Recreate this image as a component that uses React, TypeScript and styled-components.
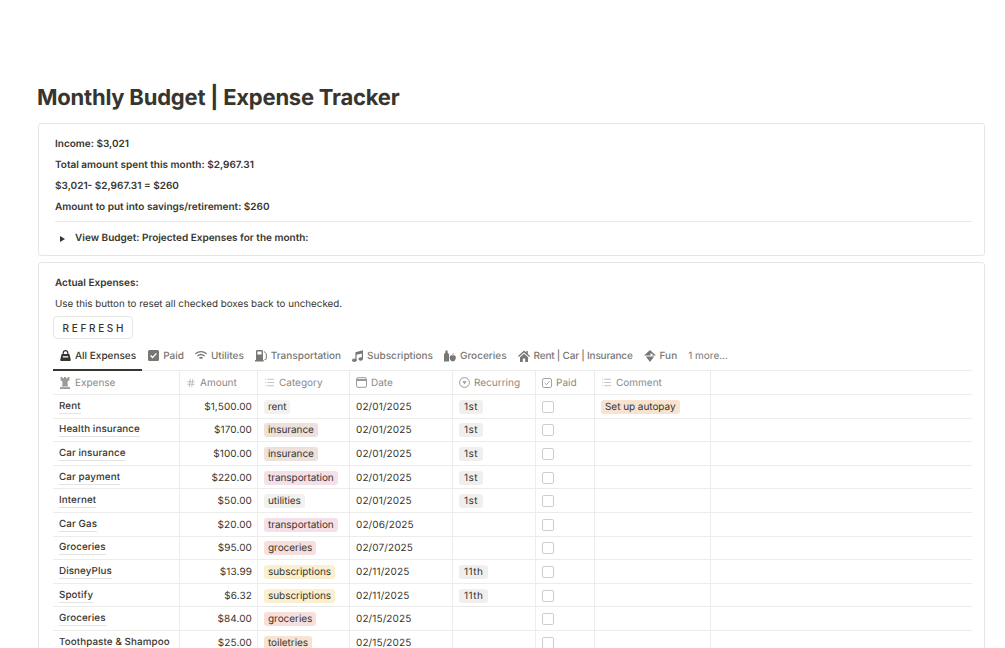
import React from 'react';
import styled, {createGlobalStyle} from "styled-components";
import {Hash, List} from "lucide-react";

const GlobalStyle = createGlobalStyle`
  html, body {
    margin: 0;
    height: 100%;
    overflow: hidden;
    background: #fff;
  }
  body {
    font-family: "Inter", "Liberation Sans", sans-serif;
    color: #37352f;
    text-rendering: geometricPrecision;
    -webkit-font-smoothing: antialiased;
  }
`

const colors = {
    gray: "#f0efed",
    brown: "#eee0da",
    pink: "#f5e0e9",
    red: "#f8dfdc",
    yellow: "#faf0d0",
    orange: "#f8e3d0",
    light: "#f1f1ef",
}

type Tag = { label: string, color: keyof typeof colors }

const rent: Tag = {label: "rent", color: "light"}
const insurance: Tag = {label: "insurance", color: "brown"}
const transportation: Tag = {label: "transportation", color: "pink"}
const utilities: Tag = {label: "utilities", color: "light"}
const groceries: Tag = {label: "groceries", color: "red"}
const subscriptions: Tag = {label: "subscriptions", color: "yellow"}
const toiletries: Tag = {label: "toiletries", color: "orange"}

const expenses = [
    {name: "Rent", amount: "$1,500.00", category: rent, date: "02/01/2025", recurring: "1st", comment: "Set up autopay"},
    {name: "Health insurance", amount: "$170.00", category: insurance, date: "02/01/2025", recurring: "1st"},
    {name: "Car insurance", amount: "$100.00", category: insurance, date: "02/01/2025", recurring: "1st"},
    {name: "Car payment", amount: "$220.00", category: transportation, date: "02/01/2025", recurring: "1st"},
    {name: "Internet", amount: "$50.00", category: utilities, date: "02/01/2025", recurring: "1st"},
    {name: "Car Gas", amount: "$20.00", category: transportation, date: "02/06/2025"},
    {name: "Groceries", amount: "$95.00", category: groceries, date: "02/07/2025"},
    {name: "DisneyPlus", amount: "$13.99", category: subscriptions, date: "02/11/2025", recurring: "11th"},
    {name: "Spotify", amount: "$6.32", category: subscriptions, date: "02/11/2025", recurring: "11th"},
    {name: "Groceries", amount: "$84.00", category: groceries, date: "02/15/2025"},
    {name: "Toothpaste & Shampoo", amount: "$25.00", category: toiletries, date: "02/15/2025"},
]

const BagLockIcon = () => (
    <svg width="11" height="11" viewBox="0 0 11 11" fill="currentColor">
        <path d="M2.6 4V3a2.900 2.900 0 0 1 5.800 0v1H7.200V3a1.700 1.700 0 0 0-3.400 0v1z"/>
        <path d="M1.600 4h7.800l1.300 5.600a1.100 1.100 0 0 1-1 1.400H1.300a1.100 1.100 0 0 1-1-1.400z"/>
        <rect x="2.800" y="6.200" width="5.400" height="1.300" fill="#fff"/>
    </svg>
)

const CheckedBox = () => (
    <svg width="11" height="11" viewBox="0 0 11 11">
        <rect width="11" height="11" rx="1.500" fill="currentColor"/>
        <path d="M2.600 5.600l2 2 3.800-4.200" stroke="#fff" strokeWidth="1.400" fill="none"/>
    </svg>
)

const WifiIcon = () => (
    <svg width="12" height="11" viewBox="0 0 12 11" fill="none" stroke="currentColor" strokeWidth="1.300" strokeLinecap="round">
        <path d="M.8 3.600c3-2.700 7.400-2.700 10.400 0"/>
        <path d="M2.800 5.800c1.900-1.600 4.500-1.600 6.400 0"/>
        <path d="M5 8c.6-.4 1.400-.4 2 0" strokeWidth="1.600"/>
    </svg>
)

const PumpIcon = () => (
    <svg width="12" height="12" viewBox="0 0 12 12" fill="currentColor">
        <path d="M1 1.200A1.200 1.200 0 0 1 2.200 0h4.600A1.200 1.200 0 0 1 8 1.200V10h.7v1.500H0V10h1zM2.400 1.500v3h4.200v-3z" fillRule="evenodd"/>
        <path d="M9 1.500l2.300 2.200v5.100a1 1 0 0 1-1.900.3" fill="none" stroke="currentColor" strokeWidth="1"/>
    </svg>
)

const MusicIcon = () => (
    <svg width="11" height="12" viewBox="0 0 11 12" fill="currentColor">
        <path d="M3.400 2.200L11 .2V9h-1.200V3.400L4.600 4.800V10.300H3.400z"/>
        <ellipse cx="2.300" cy="10.200" rx="2.300" ry="1.700"/>
        <ellipse cx="8.700" cy="9" rx="2.300" ry="1.700"/>
    </svg>
)

const GroceryIcon = () => (
    <svg width="12" height="12" viewBox="0 0 13 12" fill="currentColor">
        <path d="M1.500 0h2.400v2.200L5.500 4v8H0V4l1.500-1.800z"/>
        <path d="M9.500 5.400c1.800-.8 3.300.2 3.300 2.200 0 2.300-1.500 4.600-3.300 4.200-1.800.4-3.300-1.900-3.300-4.200 0-2 1.500-3 3.300-2.200z"/>
        <path d="M9.400 5c0-1 .4-1.800 1.300-2" stroke="currentColor" strokeWidth=".8" fill="none"/>
    </svg>
)

const HouseIcon = () => (
    <svg width="12" height="12" viewBox="0 0 12 12" fill="currentColor">
        <path d="M6 .6l2.300 2V1h1.500v3l2.200 2-.8.9L6 2.400.8 6.900 0 6z"/>
        <path d="M2 7.200L6 3.700l4 3.500V12H7.200V8.400H4.800V12H2z"/>
    </svg>
)

const DiamondIcon = () => (
    <svg width="12" height="12" viewBox="0 0 12 12" fill="currentColor">
        <path d="M6 0l6 5.400H0z"/>
        <path d="M1.800 6.600h8.400L6 12z"/>
        <path d="M6.500 3l2.600 1.800-2.600 1.800z" fill="#fff"/>
    </svg>
)

const RookIcon = () => (
    <svg width="12" height="12" viewBox="-1 0 12 12" fill="currentColor">
        <path d="M.6 0h1.800v1.200h1.600V0h2v1.200h1.600V0h1.800v3.200L7.600 4.600v3.600l1 1.400H1.400l1-1.400V4.600L.6 3.200z"/>
        <rect x="0" y="10.200" width="10" height="1.800"/>
    </svg>
)

const CalendarIcon = () => (
    <svg width="11" height="11" viewBox="0 0 11 11" fill="none" stroke="currentColor">
        <rect x=".5" y=".7" width="10" height="9.600" rx="1.500"/>
        <path d="M.5 3h10" strokeWidth="2"/>
    </svg>
)

const RecurringIcon = () => (
    <svg width="11" height="11" viewBox="0 0 11 11">
        <circle cx="5.500" cy="5.500" r="4.900" fill="none" stroke="currentColor"/>
        <path d="M3.200 4.300h4.600L5.500 7.300z" fill="currentColor"/>
    </svg>
)

const CheckHeadIcon = () => (
    <svg width="10" height="10" viewBox="0 0 10 10" fill="none" stroke="currentColor" strokeWidth=".9">
        <rect x=".5" y=".5" width="9" height="9" rx="1.400"/>
        <path d="M2.700 5l1.700 1.700 3-3.300"/>
    </svg>
)

const tabs = [
    {label: "Paid", icon: <CheckedBox/>},
    {label: "Utilites", icon: <WifiIcon/>},
    {label: "Transportation", icon: <PumpIcon/>},
    {label: "Subscriptions", icon: <MusicIcon/>},
    {label: "Groceries", icon: <GroceryIcon/>},
    {label: "Rent | Car | Insurance", icon: <HouseIcon/>, tight: true},
    {label: "Fun", icon: <DiamondIcon/>},
]

const columns = [
    {label: "Expense", width: 127, icon: <RookIcon/>},
    {label: "Amount", width: 78, icon: <Hash size={10} strokeWidth={1.4}/>},
    {label: "Category", width: 92, icon: <List size={11} strokeWidth={1.3}/>},
    {label: "Date", width: 103, icon: <CalendarIcon/>},
    {label: "Recurring", width: 83, icon: <RecurringIcon/>},
    {label: "Paid", width: 59, icon: <CheckHeadIcon/>},
    {label: "Comment", width: 116, icon: <List size={11} strokeWidth={1.3}/>},
]

export default function App() {
    return (
        <>
            <GlobalStyle/>
            <Page>
                <Title>Monthly Budget | Expense Tracker</Title>
                <SummaryCard>
                    <SummaryLine>Income: $3,021</SummaryLine>
                    <SummaryLine>Total amount spent this month: $2,967.31</SummaryLine>
                    <SummaryLine>$3,021- $2,967.31 = $260</SummaryLine>
                    <SummaryLine>Amount to put into savings/retirement: $260</SummaryLine>
                    <Divider/>
                    <Toggle>
                        <Arrow/>
                        View Budget: Projected Expenses for the month:
                    </Toggle>
                </SummaryCard>
                <TableCard>
                    <SummaryLine>Actual Expenses:</SummaryLine>
                    <Note>Use this button to reset all checked boxes back to unchecked.</Note>
                    <RefreshButton>R E F R E S H</RefreshButton>
                    <TabBar>
                        <Tab $active>
                            <BagLockIcon/>
                            All Expenses
                        </Tab>
                        {tabs.map(tab => (
                            <Tab key={tab.label} $tight={tab.tight}>
                                {tab.icon}
                                {tab.label}
                            </Tab>
                        ))}
                        <More>1 more...</More>
                    </TabBar>
                    <HeaderRow>
                        {columns.map(column => (
                            <HeaderCell key={column.label} $width={column.width}>
                                {column.icon}
                                {column.label}
                            </HeaderCell>
                        ))}
                    </HeaderRow>
                    {expenses.map((expense, index) => (
                        <Row key={index}>
                            <Cell $width={127}><Name>{expense.name}</Name></Cell>
                            <AmountCell $width={78}>{expense.amount}</AmountCell>
                            <Cell $width={92}>
                                <Pill $color={expense.category.color}>{expense.category.label}</Pill>
                            </Cell>
                            <Cell $width={103}>{expense.date}</Cell>
                            <Cell $width={83}>
                                {expense.recurring && <RecurringPill $color="gray">{expense.recurring}</RecurringPill>}
                            </Cell>
                            <Cell $width={59}><Checkbox/></Cell>
                            <Cell $width={116}>
                                {expense.comment && <Pill $color="orange">{expense.comment}</Pill>}
                            </Cell>
                        </Row>
                    ))}
                </TableCard>
            </Page>
        </>
    );
}

const Page = styled.div`
  padding: 85px 20px 0 38px;
`
const Title = styled.h1`
  margin: 0 0 11px -1px;
  font-size: 22px;
  line-height: 27px;
  font-weight: 700;
  letter-spacing: -0.01em;
  color: #37352f;
`
const Card = styled.div`
  border: 1px solid #e6e6e4;
  border-radius: 3px;
  padding: 10px 12px 0 16px;
`
const SummaryCard = styled(Card)`
  height: 133px;
  box-sizing: border-box;
  margin-bottom: 6px;
`
const TableCard = styled(Card)`
  padding-bottom: 20px;
`
const SummaryLine = styled.div`
  font-size: 10px;
  line-height: 21px;
  font-weight: 600;
`
const Note = styled.div`
  font-size: 9.800px;
  line-height: 21px;
  font-weight: 400;
`
const Divider = styled.div`
  height: 1px;
  background: #e9e9e7;
  margin: 3px 0 6px;
`
const Toggle = styled.div`
  display: flex;
  align-items: center;
  font-size: 10px;
  line-height: 21px;
  font-weight: 600;
  padding-left: 5px;
`
const Arrow = styled.span`
  width: 0;
  height: 0;
  margin-right: 10px;
  border-left: 5px solid #37352f;
  border-top: 3px solid transparent;
  border-bottom: 3px solid transparent;
`
const RefreshButton = styled.button`
  display: block;
  width: 80px;
  height: 23px;
  margin: 1px 0 0 -2px;
  padding: 0;
  background: #fff;
  border: 1px solid #e6e6e4;
  border-radius: 4px;
  font-family: inherit;
  font-size: 10px;
  font-weight: 500;
  color: #37352f;
`
const TabBar = styled.div`
  display: flex;
  align-items: stretch;
  gap: 11px;
  height: 30px;
  margin-left: -2px;
  margin-top: 1px;
  border-bottom: 1px solid #ececea;
`
const Tab = styled.div<{ $active?: boolean, $tight?: boolean }>`
  display: flex;
  align-items: center;
  gap: 4px;
  padding: ${props => props.$active ? "2px 6px 0 7px" : "2px 0 0"};
  margin-right: ${props => props.$active ? "-5px" : "0"};
  margin-bottom: -1px;
  font-size: 10px;
  font-weight: 500;
  letter-spacing: ${props => props.$tight ? "-0.2px" : "0"};
  white-space: nowrap;
  color: ${props => props.$active ? "#37352f" : "#787774"};
  border-bottom: ${props => props.$active ? "2px solid #37352f" : "2px solid transparent"};
  box-sizing: border-box;
`
const More = styled.div`
  display: flex;
  align-items: center;
  padding-top: 2px;
  font-size: 10px;
  color: #787774;
`
const HeaderRow = styled.div`
  display: flex;
  height: 24px;
  box-sizing: border-box;
  margin-left: -2px;
  border-bottom: 1px solid #ececea;
`
const HeaderCell = styled.div<{ $width: number }>`
  display: flex;
  align-items: center;
  gap: 4px;
  width: ${props => props.$width}px;
  box-sizing: border-box;
  padding-left: 6px;
  border-right: 1px solid #ececea;
  font-size: 10px;
  color: #8a8986;

  svg {
    color: #9b9a97;
    flex-shrink: 0;
  }
`
const Row = styled.div`
  display: flex;
  height: 23.600px;
  box-sizing: border-box;
  margin-left: -2px;
  border-bottom: 1px solid #ececea;
`
const Cell = styled.div<{ $width: number }>`
  display: flex;
  align-items: center;
  width: ${props => props.$width}px;
  box-sizing: border-box;
  padding: 1px 0 0 6px;
  border-right: 1px solid #ececea;
  font-size: 10px;
  letter-spacing: 0.01em;
  white-space: nowrap;
`
const AmountCell = styled(Cell)`
  justify-content: flex-end;
  padding: 1px 5px 0 0;
`
const Name = styled.span`
  margin-top: 1px;
  font-size: 9.800px;
  font-weight: 500;
  border-bottom: 1px solid #e3e3e1;
  line-height: 12px;
`
const Pill = styled.span<{ $color: keyof typeof colors }>`
  display: inline-block;
  padding: 0 4px;
  border-radius: 3px;
  line-height: 14px;
  letter-spacing: -0.005em;
  background: ${props => colors[props.$color]};
`
const RecurringPill = styled(Pill)`
  padding: 0 5px;
  letter-spacing: 0.05em;
`
const Checkbox = styled.span`
  width: 10px;
  height: 10px;
  border: 1px solid #cfcecb;
  border-radius: 2px;
`
